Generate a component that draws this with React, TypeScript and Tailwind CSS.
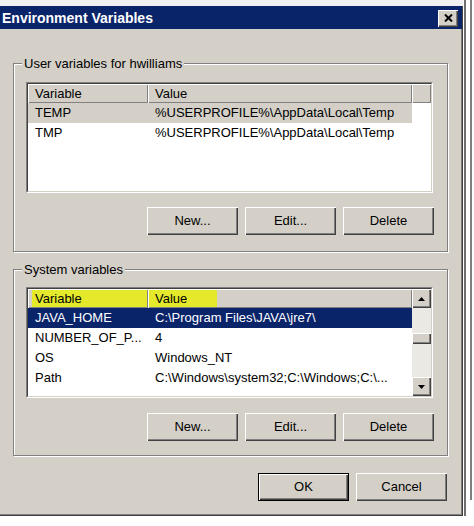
import React from "react";

type Row = { name: string; value: string };

const userRows: Row[] = [
  { name: "TEMP", value: "%USERPROFILE%\\AppData\\Local\\Temp" },
  { name: "TMP", value: "%USERPROFILE%\\AppData\\Local\\Temp" },
];

const systemRows: Row[] = [
  { name: "JAVA_HOME", value: "C:\\Program Files\\JAVA\\jre7\\" },
  { name: "NUMBER_OF_P...", value: "4" },
  { name: "OS", value: "Windows_NT" },
  { name: "Path", value: "C:\\Windows\\system32;C:\\Windows;C:\\..." },
];

const raised =
  "shadow-[inset_1px_1px_0_#ffffff,inset_-1px_-1px_0_#404040,inset_-2px_-2px_0_#808080]";

const Btn: React.FC<{ label: string; isDefault?: boolean }> = ({
  label,
  isDefault,
}) => (
  <button
    className={`flex h-[28px] w-[91px] items-center justify-center bg-[#d4d0c8] text-[13px] text-black ${
      isDefault ? "border border-black" : ""
    } ${raised}`}
  >
    {label}
  </button>
);

const Arrow: React.FC<{ down?: boolean }> = ({ down }) => (
  <svg width="7" height="4" viewBox="0 0 7 4">
    <polygon points={down ? "0,0 7,0 3.5,4" : "3.5,0 7,4 0,4"} fill="#000" />
  </svg>
);

const ScrollBar: React.FC = () => (
  <div className="flex w-[19px] flex-col bg-[#ebe9e4]">
    <div className={`flex h-[19px] items-center justify-center bg-[#d4d0c8] ${raised}`}>
      <Arrow />
    </div>
    <div className="h-[25px]" />
    <div className={`h-[11px] bg-[#d4d0c8] ${raised}`} />
    <div className="flex-1" />
    <div className={`flex h-[19px] items-center justify-center bg-[#d4d0c8] ${raised}`}>
      <Arrow down />
    </div>
  </div>
);

const headCell =
  "relative leading-[19px] px-[7px] shadow-[inset_1px_1px_0_#ffffff,inset_-1px_-1px_0_#808080]";

const VarList: React.FC<{
  rows: Row[];
  active?: boolean;
  marked?: boolean;
  scroll?: boolean;
}> = ({ rows, active, marked, scroll }) => (
  <div className="h-[111px] w-[407px] border border-t-[#808080] border-l-[#808080] border-r-white border-b-white">
    <div className="flex h-full border border-t-[#404040] border-l-[#404040] border-r-[#d4d0c8] border-b-[#d4d0c8] bg-white">
      <div className="flex flex-1 flex-col">
        <div className="relative flex h-[19px] bg-[#d4d0c8] text-[13px] text-black">
          {marked && (
            <div className="absolute inset-y-0 left-[4px] w-[185px] bg-[#e4e92c]" />
          )}
          <div className={`${headCell} w-[120px]`}>Variable</div>
          <div className={`${headCell} w-[264px]`}>Value</div>
          {!scroll && <div className={`${headCell} flex-1`} />}
        </div>
        {rows.map((r, i) => (
          <div
            key={r.name}
            className={`flex h-[20px] w-[384px] text-[13px] leading-[20px] ${
              i === 0
                ? active
                  ? "bg-[#0a246a] text-white"
                  : "bg-[#d4d0c8] text-black"
                : "text-black"
            }`}
          >
            <div className="w-[120px] whitespace-nowrap px-[7px]">{r.name}</div>
            <div className="w-[264px] whitespace-nowrap px-[7px]">{r.value}</div>
          </div>
        ))}
      </div>
      {scroll && <ScrollBar />}
    </div>
  </div>
);

const Group: React.FC<{
  title: string;
  className: string;
  children: React.ReactNode;
}> = ({ title, className, children }) => (
  <div
    className={`relative flex flex-col border border-[#808080] pl-[12px] pr-[13px] shadow-[inset_1px_1px_0_#ffffff,1px_1px_0_#ffffff] ${className}`}
  >
    <span className="absolute -top-[8px] left-[8px] bg-[#d4d0c8] px-[2px] text-[13px] leading-[16px] text-black">
      {title}
    </span>
    {children}
  </div>
);

const ButtonRow: React.FC<{ className: string }> = ({ className }) => (
  <div className={`flex justify-end gap-[7px] ${className}`}>
    <Btn label="New..." />
    <Btn label="Edit..." />
    <Btn label="Delete" />
  </div>
);

export default function App() {
  return (
    <div className="flex h-[526px] w-[474px] overflow-hidden bg-white font-['Liberation_Sans',Arial,sans-serif]">
      <div className="flex w-[463px] flex-col">
        <div className="h-[6px] bg-[#f1f1f1]" />
        <div className="flex h-[510px] flex-col border-r border-b border-[#404040] bg-[#d4d0c8] shadow-[inset_-1px_-1px_0_#808080]">
          {/* title bar */}
          <div className="flex h-[23px] items-center justify-between bg-[#0a246a] pl-[2px] pr-[4px] pt-[1px]">
            <span className="text-[14px] font-bold text-white">
              Environment Variables
            </span>
            <div className={`flex h-[17px] w-[20px] items-center justify-center bg-[#d4d0c8] ${raised}`}>
              <svg width="9" height="8" viewBox="0 0 9 8">
                <path d="M1 0.5 L8 7.5 M8 0.5 L1 7.5" stroke="#000" strokeWidth="2" />
              </svg>
            </div>
          </div>

          <div className="flex flex-col pl-[13px] pr-[14px]">
            <Group title="User variables for hwilliams" className="mt-[34px] pt-[18px] pb-[16px]">
              <VarList rows={userRows} />
              <ButtonRow className="mt-[14px]" />
            </Group>

            <Group title="System variables" className="mt-[17px] pt-[17px] pb-[14px]">
              <VarList rows={systemRows} active marked scroll />
              <ButtonRow className="mt-[15px]" />
            </Group>

            <div className="mt-[17px] flex justify-end gap-[7px] pr-[1px]">
              <Btn label="OK" isDefault />
              <Btn label="Cancel" />
            </div>
          </div>
        </div>
      </div>

      {/* edge of the window behind */}
      <div className="flex h-[516px] w-[11px]">
        <div className="ml-[1px] w-[2px] bg-[#6f6f6f]" />
        <div className="ml-[4px] h-[500px] w-[2px] bg-[#808080]" />
      </div>
    </div>
  );
}
